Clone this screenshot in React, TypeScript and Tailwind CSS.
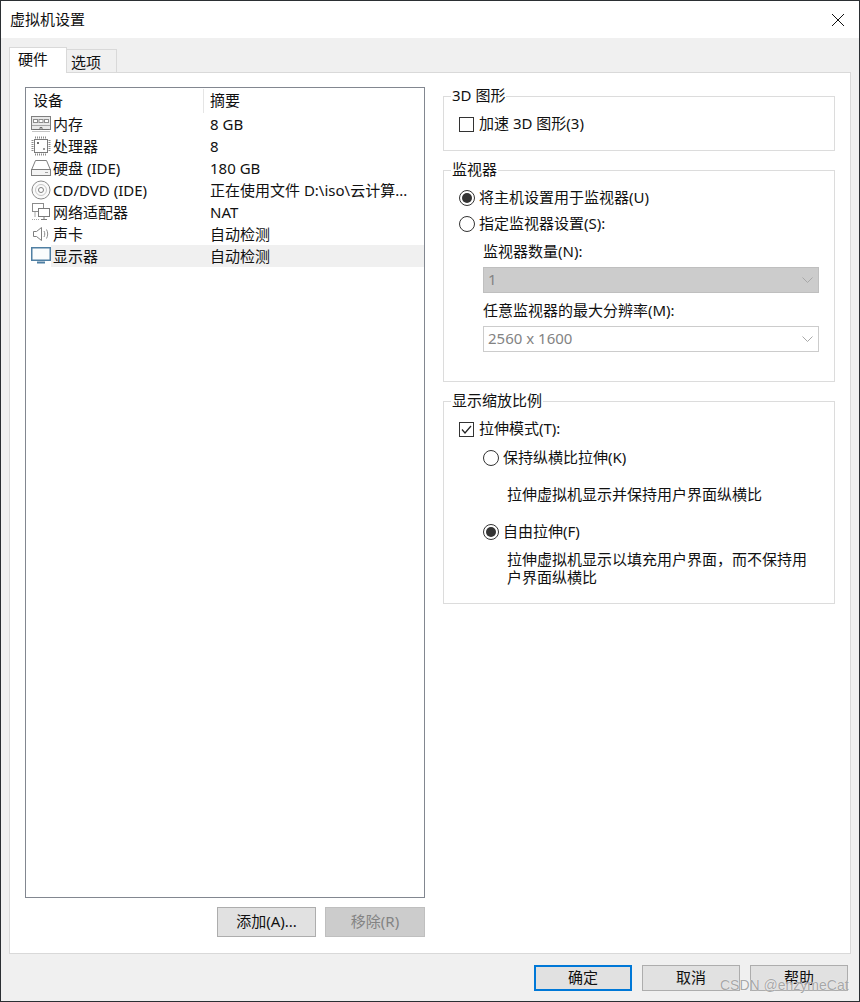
import type { ReactNode } from 'react';

const MemoryIcon = () => (
  <svg width="20" height="16" viewBox="0 0 20 16" fill="none">
    <rect x="0.5" y="0.5" width="19" height="13" fill="#e9e9e9" stroke="#7f7f7f" />
    <rect x="2.500" y="3.500" width="4" height="3" fill="#fff" stroke="#8c8c8c" />
    <rect x="8" y="3.500" width="4" height="3" fill="#fff" stroke="#8c8c8c" />
    <rect x="13.500" y="3.500" width="4" height="3" fill="#fff" stroke="#8c8c8c" />
    <path d="M1 9.500h18" stroke="#a6a6a6" />
    <path d="M2 13.500h7v-2h2v2h7" stroke="#6f6f6f" />
    <path d="M1 15.500h18" stroke="#c4c4c4" />
  </svg>
);

const CpuIcon = () => (
  <svg width="20" height="20" viewBox="0 0 20 20" fill="none">
    <rect x="3.500" y="3.500" width="13" height="13" fill="#fff" stroke="#7a7a7a" />
    <path d="M4 1.500h12M4 18.500h12M1.500 4v12M18.500 4v12" stroke="#8c8c8c" strokeWidth="2" strokeDasharray="1 1" />
    <rect x="6" y="6" width="2" height="2" fill="#6f6f6f" />
    <rect x="12" y="12" width="2" height="2" fill="#9a9a9a" />
  </svg>
);

const DiskIcon = () => (
  <svg width="20" height="16" viewBox="0 0 20 16" fill="none">
    <path d="M4.500 0.500h11l4 9.500h-19z" fill="#fff" stroke="#7f7f7f" />
    <rect x="0.500" y="9.500" width="19" height="6" fill="#f4f4f4" stroke="#7f7f7f" />
    <path d="M14 12.500h3" stroke="#a0a0a0" />
  </svg>
);

const CdIcon = () => (
  <svg width="20" height="20" viewBox="0 0 20 20" fill="none">
    <circle cx="10" cy="10" r="9" fill="#fafafa" stroke="#8c8c8c" />
    <circle cx="10" cy="10" r="5.500" stroke="#c8c8c8" />
    <circle cx="10" cy="10" r="2.500" fill="#fff" stroke="#7f7f7f" />
  </svg>
);

const NetworkIcon = () => (
  <svg width="20" height="20" viewBox="0 0 20 20" fill="none">
    <rect x="1.500" y="1.500" width="11" height="8" fill="#fff" stroke="#8c8c8c" />
    <rect x="7.500" y="6.500" width="11" height="8" fill="#fff" stroke="#7a7a7a" />
    <path d="M13 15v2M10 17.500h6" stroke="#7a7a7a" />
    <path d="M1 17.500h7" stroke="#a6a6a6" strokeDasharray="1 1" />
    <path d="M4 10v5" stroke="#a6a6a6" />
  </svg>
);

const SpeakerIcon = () => (
  <svg width="20" height="16" viewBox="0 0 20 16" fill="none">
    <path d="M2.500 5.500h3l5-4v13l-5-4h-3z" fill="#fff" stroke="#7f7f7f" />
    <path d="M13 5c1 1.800 1 4.200 0 6M15.500 3.500c1.600 2.800 1.600 6.200 0 9" stroke="#8c8c8c" />
  </svg>
);

const DisplayIcon = () => (
  <svg width="20" height="18" viewBox="0 0 20 18" fill="none">
    <rect x="0.750" y="0.750" width="18.500" height="12.500" fill="#fafcfd" stroke="#4f7fa3" strokeWidth="1.500" />
    <path d="M6 15.500h8" stroke="#4f7fa3" strokeWidth="2" />
  </svg>
);

const devices = [
  { icon: <MemoryIcon />, name: '内存', summary: '8 GB' },
  { icon: <CpuIcon />, name: '处理器', summary: '8' },
  { icon: <DiskIcon />, name: '硬盘 (IDE)', summary: '180 GB' },
  { icon: <CdIcon />, name: 'CD/DVD (IDE)', summary: '正在使用文件 D:\\iso\\云计算...' },
  { icon: <NetworkIcon />, name: '网络适配器', summary: 'NAT' },
  { icon: <SpeakerIcon />, name: '声卡', summary: '自动检测' },
  { icon: <DisplayIcon />, name: '显示器', summary: '自动检测', selected: true },
];

function Check({ checked, children }: { checked?: boolean; children: ReactNode }) {
  return (
    <div className="flex h-[22px] items-center gap-[5px] pl-[15px]">
      <span className="flex h-[15px] w-[15px] items-center justify-center border border-[#333] bg-white">
        {checked && (
          <svg width="13" height="13" viewBox="0 0 13 13" fill="none">
            <path d="M2 6.500l3 3.500 6-7" stroke="#222" strokeWidth="1.200" />
          </svg>
        )}
      </span>
      <span className="pb-[2px]">{children}</span>
    </div>
  );
}

function Radio({ checked, children }: { checked?: boolean; children: ReactNode }) {
  return (
    <div className="flex h-[22px] items-center gap-[4px]">
      <span className="flex h-[16px] w-[16px] items-center justify-center rounded-full border border-[#333] bg-white">
        {checked && <span className="h-[10px] w-[10px] rounded-full bg-[#333]" />}
      </span>
      <span className="pb-[2px]">{children}</span>
    </div>
  );
}

function Select({ value, disabled }: { value: string; disabled?: boolean }) {
  return (
    <div
      className={
        disabled
          ? 'flex h-[26px] w-[336px] items-center justify-between border border-[#bfbfbf] bg-[#cccccc] px-[4px] text-[#838383]'
          : 'flex h-[26px] w-[336px] items-center justify-between border border-[#cccccc] bg-white px-[4px] text-[#838383]'
      }
    >
      <span className="pb-[2px]">{value}</span>
      <svg width="11" height="6" viewBox="0 0 11 6" fill="none" className="mr-[1px]">
        <path d="M0.500 0.500l5 5 5-5" stroke="#a8a8a8" />
      </svg>
    </div>
  );
}

function Group({ title, className, children }: { title: string; className: string; children: ReactNode }) {
  return (
    <fieldset className={`border border-[#dcdcdc] ${className}`}>
      <legend className="ml-[7px] h-[18px] px-[1px] leading-[16px]">{title}</legend>
      {children}
    </fieldset>
  );
}

function Button({ children, className }: { children: ReactNode; className: string }) {
  return <button className={`flex items-center justify-center border pb-[1px] ${className}`}>{children}</button>;
}

export default function App() {
  return (
    <div
      className="relative h-[1002px] w-[860px] overflow-hidden bg-[#2b2f33] px-px py-px text-[15px] text-[#111]"
      style={{ fontFamily: '"Noto Sans", "Noto Sans CJK SC", sans-serif' }}
    >
      <div className="flex h-[1000px] flex-col bg-[#f0f0f0]">
        <div className="flex h-[37px] items-center justify-between bg-white pl-[9px] pr-[14px]">
          <span>虚拟机设置</span>
          <svg width="14" height="14" viewBox="0 0 14 14" fill="none">
            <path d="M1 1l12 12M13 1L1 13" stroke="#111" />
          </svg>
        </div>

        <div className="flex flex-col px-[8px] pt-[9px]">
          <div className="flex h-[25px] items-end">
            <div className="relative z-10 -mb-px flex h-[26px] w-[58px] items-center border border-b-0 border-[#d9d9d9] bg-white pb-[2px] pl-[8px]">
              硬件
            </div>
            <div className="flex h-[23px] w-[50px] items-center border border-b-0 border-l-0 border-[#d9d9d9] bg-[#f0f0f0] pl-[4px] pt-[2px]">
              选项
            </div>
          </div>

          <div className="flex h-[882px] gap-[18px] border border-[#d9d9d9] bg-white pl-[15px] pt-[14px]">
            <div className="flex w-[400px] flex-col">
              <div className="h-[811px] border border-[#828790] bg-white">
                <div className="flex h-[25px] pt-[1px]">
                  <span className="w-[177px] pl-[7px]">设备</span>
                  <span className="border-l border-[#e5e5e5] pl-[6px]">摘要</span>
                </div>
                {devices.map((d) => (
                  <div key={d.name} className="flex h-[22px] items-center">
                    <span className="flex w-[25px] shrink-0 justify-end">{d.icon}</span>
                    <div className={d.selected ? 'flex h-[22px] flex-1 items-center bg-[#f0f0f0]' : 'flex h-[22px] flex-1 items-center'}>
                      <span className="w-[159px] pl-[2px]">{d.name}</span>
                      <span>{d.summary}</span>
                    </div>
                  </div>
                ))}
              </div>
              <div className="mt-[9px] flex justify-end gap-[9px]">
                <Button className="h-[30px] w-[99px] border-[#adadad] bg-[#e1e1e1]">添加(A)...</Button>
                <Button className="h-[30px] w-[100px] border-[#bfbfbf] bg-[#cccccc] text-[#838383]">移除(R)</Button>
              </div>
            </div>

            <div className="flex w-[392px] flex-col gap-[10px]">
              <Group title="3D 图形" className="h-[64px] pt-[8px]">
                <Check>加速 3D 图形(3)</Check>
              </Group>

              <Group title="监视器" className="h-[221px] pt-[8px]">
                <div className="pl-[15px]">
                  <Radio checked>将主机设置用于监视器(U)</Radio>
                  <div className="mt-[4px]">
                    <Radio>指定监视器设置(S):</Radio>
                  </div>
                  <div className="pl-[24px]">
                    <div className="mt-[6px] h-[22px] leading-[20px]">监视器数量(N):</div>
                    <div className="mt-[4px]">
                      <Select value="1" disabled />
                    </div>
                    <div className="mt-[7px] h-[22px] leading-[20px]">任意监视器的最大分辨率(M):</div>
                    <div className="mt-[4px]">
                      <Select value="2560 x 1600" />
                    </div>
                  </div>
                </div>
              </Group>

              <Group title="显示缩放比例" className="h-[212px] pt-[8px]">
                <Check checked>拉伸模式(T):</Check>
                <div className="pl-[39px]">
                  <div className="mt-[7px]">
                    <Radio>保持纵横比拉伸(K)</Radio>
                  </div>
                  <p className="mt-[14px] h-[22px] pl-[24px] leading-[22px]">拉伸虚拟机显示并保持用户界面纵横比</p>
                  <div className="mt-[16px]">
                    <Radio checked>自由拉伸(F)</Radio>
                  </div>
                  <p className="mt-[7px] w-[329px] pl-[24px] leading-[18px]">拉伸虚拟机显示以填充用户界面，而不保持用户界面纵横比</p>
                </div>
              </Group>
            </div>
          </div>

          <div className="mt-[11px] flex justify-end gap-[10px] pr-[3px]">
            <Button className="h-[26px] w-[98px] border-2 border-[#0078d7] bg-[#e1e1e1]">确定</Button>
            <Button className="h-[26px] w-[98px] border-[#adadad] bg-[#e1e1e1]">取消</Button>
            <Button className="h-[26px] w-[98px] border-[#adadad] bg-[#e1e1e1]">帮助</Button>
          </div>
        </div>
      </div>

      <span
        className="absolute left-[720px] top-[976px] text-[14px] leading-[18px] text-[#9c9c9c]/90 [text-shadow:0_0_1px_#fff]"
        style={{ fontFamily: '"Liberation Sans", sans-serif' }}
      >
        CSDN @enzymeCat
      </span>
    </div>
  );
}
